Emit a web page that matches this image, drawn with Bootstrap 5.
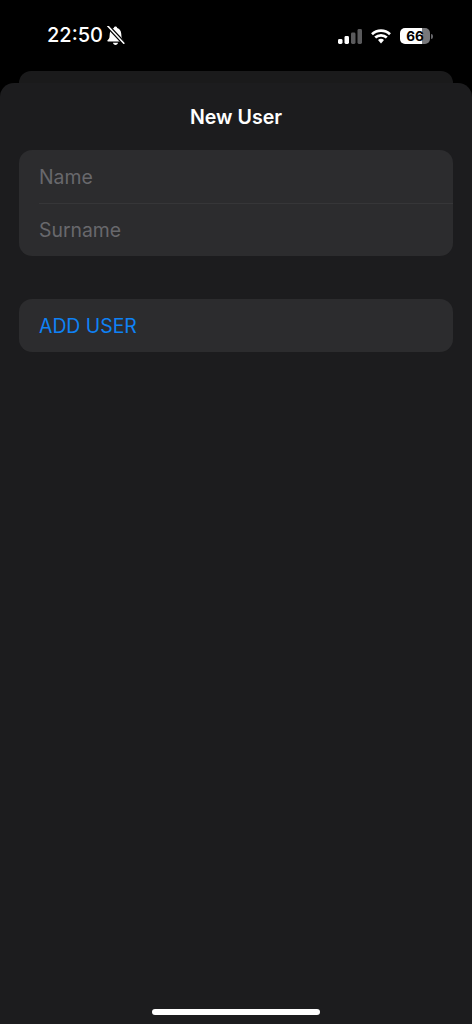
<!DOCTYPE html>
<html lang="en">
<head>
<meta charset="utf-8">
<meta name="viewport" content="width=device-width, initial-scale=1">
<link href="https://cdn.jsdelivr.net/npm/bootstrap@5.3.0/dist/css/bootstrap.min.css" rel="stylesheet">
<style>
html,body{height:1024px;overflow:hidden;background:#000;font-family:Inter,"Liberation Sans",sans-serif;}
.phone{height:1024px;width:472px;}
.statusrow{height:71px;padding:22px 39px 0 47px;color:#fff;align-items:flex-start;}
.clock{font-size:20px;font-weight:500;line-height:27px;}
.leftgroup{gap:3px;}
.rightgroup{height:27px;gap:9px;padding-top:1px;}
.backsheet{height:12px;margin:0 19px;background:#1a1a1b;border-radius:12px 12px 0 0;}
.sheet{height:941px;background:#1c1c1e;border-radius:14px 14px 0 0;padding:0 19px;}
.sheet-title{color:#fff;font-size:19.6px;font-weight:600;line-height:24px;text-align:center;padding-top:22px;height:67px;}
.groupbox{background:#2c2c2e;border-radius:13px;}
.fieldrow{height:52.5px;padding:0 20px;font-size:19.4px;color:#68686c;line-height:53px;}
.fieldrow-first{line-height:55px;}
.divline{height:1px;margin-left:20px;background:#363638;}
.addrow{margin-top:43px;height:52.5px;padding:0 20px;font-size:19.4px;line-height:54px;color:#0f82f5;}
.homebar{width:168px;height:6px;border-radius:3px;background:#fff;bottom:9px;left:152px;}
.batt{width:30px;height:16px;border-radius:5px;background:linear-gradient(90deg,#fff 0 72%,#77777a 72% 100%);color:#000;font-size:13.5px;font-weight:700;line-height:16px;text-align:center;}
.battcap{width:2px;height:5px;background:#66666a;border-radius:0 2px 2px 0;margin-left:1px;}
</style>
</head>
<body class="m-0">
<div class="phone position-relative">
  <div class="statusrow d-flex justify-content-between">
    <div class="leftgroup d-flex align-items-center">
      <span class="clock">22:50</span>
      <svg width="19" height="19" viewBox="1 1 16 16" aria-hidden="true"><path fill="#fff" d="M9 1.500c.8 0 1.300.5 1.400 1.200 2 .6 3.200 2.300 3.400 4.600l.3 3.200c.1 1 .7 1.700 1.600 2.500.4.4.2 1-.4 1H2.700c-.6 0-.8-.6-.4-1 .9-.8 1.500-1.500 1.600-2.500l.3-3.200c.2-2.300 1.400-4 3.400-4.600.1-.7.6-1.200 1.400-1.200zM6.900 15.200h4.200C10.900 16.300 10.100 17 9 17s-1.900-.7-2.100-1.800z"/><path d="M2 .5 16.500 16" stroke="#000" stroke-width="3.400"/><path d="M2.500 1 16 15.500" stroke="#fff" stroke-width="1.400" stroke-linecap="round"/></svg>
    </div>
    <div class="rightgroup d-flex align-items-center">
      <svg width="24" height="15" viewBox="0 0 24 15" aria-hidden="true"><rect x="0" y="10" width="4.500" height="5" rx="1.400" fill="#fff"/><rect x="6.500" y="7" width="4.500" height="8" rx="1.400" fill="#fff"/><rect x="13" y="3.500" width="4.500" height="11.500" rx="1.400" fill="#5a5a5c"/><rect x="19.500" y="0" width="4.500" height="15" rx="1.400" fill="#5a5a5c"/></svg>
      <svg width="20" height="15" viewBox="0 0 20 15" aria-hidden="true"><path fill="none" stroke="#fff" stroke-width="2.700" d="M1 5.200c5-4.700 13-4.700 18 0M4.200 8.600c3.200-3 8.400-3 11.600 0"/><path fill="#fff" d="M10 9.800c1.200 0 2.200.4 3 1.200L10 14.500 7 11c.8-.8 1.800-1.200 3-1.200z"/></svg>
      <div class="d-flex align-items-center">
        <div class="batt">66</div>
        <div class="battcap"></div>
      </div>
    </div>
  </div>
  <div class="backsheet"></div>
  <div class="sheet">
    <div class="sheet-title">New User</div>
    <div class="groupbox">
      <div class="fieldrow fieldrow-first">Name</div>
      <div class="divline"></div>
      <div class="fieldrow">Surname</div>
    </div>
    <div class="groupbox addrow">ADD USER</div>
  </div>
  <div class="homebar position-absolute"></div>
</div>
<script src="https://cdn.jsdelivr.net/npm/bootstrap@5.3.0/dist/js/bootstrap.bundle.min.js"></script>
</body>
</html>
